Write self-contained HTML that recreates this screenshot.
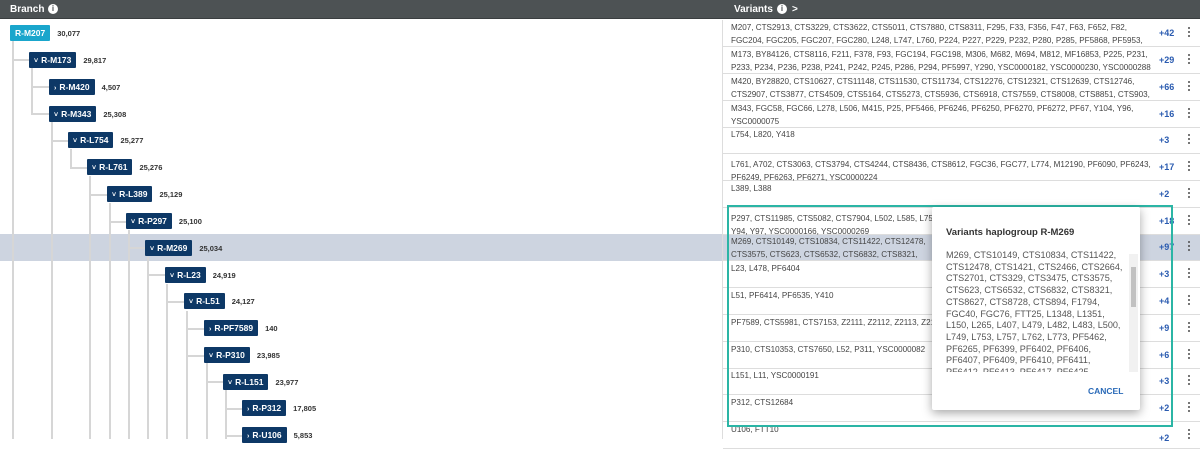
<!DOCTYPE html>
<html><head><meta charset="utf-8"><style>
*{margin:0;padding:0;box-sizing:border-box}
body{width:1200px;height:439px;overflow:hidden;background:#fff;font-family:"Liberation Sans",Arial,sans-serif;position:relative}
.hdr{position:absolute;left:0;top:0;width:1200px;height:19px;background:#4d5254;border-bottom:1px solid #3a3e40}
.ht{position:absolute;top:4px;color:#fff;font-weight:bold;font-size:10px}
.info{position:absolute;top:4px;width:10px;height:10px;border-radius:50%;background:#fff;color:#4d5254;font-size:8px;font-weight:bold;text-align:center;line-height:10px}
.hl{position:absolute;left:0;top:234px;width:1200px;height:27px;background:#cdd4e0}
.v{position:absolute;width:1.5px;background:#d6d6d6}
.h{position:absolute;height:1.5px;background:#d6d6d6}
.n{position:absolute;display:flex;align-items:center;gap:7px;height:16px}
.box{height:16px;background:#0d3866;color:#fff;font-size:8.5px;font-weight:bold;line-height:16px;padding:0 5px;border-radius:1px;white-space:nowrap}
.box i{font-style:normal;font-size:7px;margin-right:3px}
.cnt{font-size:7.5px;font-weight:bold;color:#333;white-space:nowrap}
.panel{position:absolute;left:722px;top:20px;width:478px;height:419px;border-left:1px solid #ddd}
.row{position:absolute;left:0;width:478px;height:27px;border-bottom:1px solid #ddd}
.row .t{position:absolute;left:8px;top:2px;width:425px;font-size:8.1px;line-height:12.5px;color:#444;overflow:hidden;height:25px;white-space:normal}
.row .c{position:absolute;left:436px;top:8px;font-size:9px;font-weight:bold;color:#2a5bb0}
.row .k{position:absolute;left:465px;top:6px;width:2px;height:12px;background:radial-gradient(circle,#555 0.9px,transparent 1.1px) 0 0/2px 4px}
.teal{position:absolute;left:727px;top:205px;width:446px;height:222px;border:2px solid #2bb5a5}
.pop{position:absolute;left:932px;top:207px;width:208px;height:203px;background:#fff;box-shadow:0 3px 10px rgba(0,0,0,.35);border-radius:2px}
.pop .tt{position:absolute;left:14px;top:20px;font-size:9.5px;font-weight:bold;color:#333}
.pop .b{position:absolute;left:14px;top:43px;width:178px;font-size:9.1px;line-height:11.7px;color:#555;height:122px;overflow:hidden}
.pop .sb{position:absolute;left:197px;top:47px;width:9px;height:118px;background:#f1f1f1}
.pop .th{position:absolute;left:199px;top:60px;width:5px;height:40px;background:#c1c1c1}
.pop .cc{position:absolute;left:156px;top:179px;font-size:8.5px;font-weight:bold;color:#2a6ab8}
</style></head><body>
<div class="hdr"></div>
<div class="ht" style="left:10px">Branch</div><div class="info" style="left:48px">i</div>
<div class="ht" style="left:734px">Variants</div><div class="info" style="left:777px">i</div><div class="ht" style="left:792px">&gt;</div>
<div class="hl"></div>

<div class="v" style="left:12px;top:41px;height:398px"></div>
<div class="v" style="left:31px;top:68px;height:46px"></div>
<div class="v" style="left:51px;top:122px;height:317px"></div>
<div class="v" style="left:70px;top:149px;height:19px"></div>
<div class="v" style="left:89px;top:176px;height:263px"></div>
<div class="v" style="left:109px;top:203px;height:236px"></div>
<div class="v" style="left:128px;top:230px;height:209px"></div>
<div class="v" style="left:147px;top:257px;height:182px"></div>
<div class="v" style="left:166px;top:284px;height:155px"></div>
<div class="v" style="left:186px;top:311px;height:128px"></div>
<div class="v" style="left:206px;top:362px;height:77px"></div>
<div class="v" style="left:225px;top:389px;height:50px"></div>

<div class="h" style="left:12px;top:59px;width:18px"></div>
<div class="h" style="left:31px;top:86px;width:18px"></div>
<div class="h" style="left:31px;top:113px;width:18px"></div>
<div class="h" style="left:51px;top:140px;width:18px"></div>
<div class="h" style="left:70px;top:167px;width:18px"></div>
<div class="h" style="left:89px;top:194px;width:18px"></div>
<div class="h" style="left:109px;top:221px;width:18px"></div>
<div class="h" style="left:128px;top:247px;width:18px"></div>
<div class="h" style="left:147px;top:274px;width:18px"></div>
<div class="h" style="left:166px;top:301px;width:18px"></div>
<div class="h" style="left:186px;top:328px;width:18px"></div>
<div class="h" style="left:186px;top:355px;width:18px"></div>
<div class="h" style="left:206px;top:381px;width:18px"></div>
<div class="h" style="left:225px;top:408px;width:18px"></div>
<div class="h" style="left:225px;top:435px;width:18px"></div>

<div class="n" style="left:10px;top:25px"><div class="box" style="background:#1aa6cc">R-M207</div><div class="cnt">30,077</div></div>
<div class="n" style="left:29px;top:52px"><div class="box"><i>˅</i>R-M173</div><div class="cnt">29,817</div></div>
<div class="n" style="left:49px;top:79px"><div class="box"><i>›</i>R-M420</div><div class="cnt">4,507</div></div>
<div class="n" style="left:49px;top:106px"><div class="box"><i>˅</i>R-M343</div><div class="cnt">25,308</div></div>
<div class="n" style="left:68px;top:132px"><div class="box"><i>˅</i>R-L754</div><div class="cnt">25,277</div></div>
<div class="n" style="left:87px;top:159px"><div class="box"><i>˅</i>R-L761</div><div class="cnt">25,276</div></div>
<div class="n" style="left:107px;top:186px"><div class="box"><i>˅</i>R-L389</div><div class="cnt">25,129</div></div>
<div class="n" style="left:126px;top:213px"><div class="box"><i>˅</i>R-P297</div><div class="cnt">25,100</div></div>
<div class="n" style="left:145px;top:240px"><div class="box"><i>˅</i>R-M269</div><div class="cnt">25,034</div></div>
<div class="n" style="left:165px;top:267px"><div class="box"><i>˅</i>R-L23</div><div class="cnt">24,919</div></div>
<div class="n" style="left:184px;top:293px"><div class="box"><i>˅</i>R-L51</div><div class="cnt">24,127</div></div>
<div class="n" style="left:204px;top:320px"><div class="box"><i>›</i>R-PF7589</div><div class="cnt">140</div></div>
<div class="n" style="left:204px;top:347px"><div class="box"><i>˅</i>R-P310</div><div class="cnt">23,985</div></div>
<div class="n" style="left:223px;top:374px"><div class="box"><i>˅</i>R-L151</div><div class="cnt">23,977</div></div>
<div class="n" style="left:242px;top:400px"><div class="box"><i>›</i>R-P312</div><div class="cnt">17,805</div></div>
<div class="n" style="left:242px;top:427px"><div class="box"><i>›</i>R-U106</div><div class="cnt">5,853</div></div>

<div class="panel">
<div class="row" style="top:0"><div class="t">M207, CTS2913, CTS3229, CTS3622, CTS5011, CTS7880, CTS8311, F295, F33, F356, F47, F63, F652, F82, FGC204, FGC205, FGC207, FGC280, L248, L747, L760, P224, P227, P229, P232, P280, P285, PF5868, PF5953, PF6002,</div><div class="c">+42</div><div class="k"></div></div>
<div class="row" style="top:27px"><div class="t">M173, BY84126, CTS8116, F211, F378, F93, FGC194, FGC198, M306, M682, M694, M812, MF16853, P225, P231, P233, P234, P236, P238, P241, P242, P245, P286, P294, PF5997, Y290, YSC0000182, YSC0000230, YSC0000288</div><div class="c">+29</div><div class="k"></div></div>
<div class="row" style="top:54px"><div class="t">M420, BY28820, CTS10627, CTS11148, CTS11530, CTS11734, CTS12276, CTS12321, CTS12639, CTS12746, CTS2907, CTS3877, CTS4509, CTS5164, CTS5273, CTS5936, CTS6918, CTS7559, CTS8008, CTS8851, CTS903,</div><div class="c">+66</div><div class="k"></div></div>
<div class="row" style="top:81px"><div class="t">M343, FGC58, FGC66, L278, L506, M415, P25, PF5466, PF6246, PF6250, PF6270, PF6272, PF67, Y104, Y96, YSC0000075</div><div class="c">+16</div><div class="k"></div></div>
<div class="row" style="top:107px"><div class="t">L754, L820, Y418</div><div class="c">+3</div><div class="k"></div></div>
<div class="row" style="top:134px"><div class="t" style="top:5px">L761, A702, CTS3063, CTS3794, CTS4244, CTS8436, CTS8612, FGC36, FGC77, L774, M12190, PF6090, PF6243, PF6249, PF6263, PF6271, YSC0000224</div><div class="c">+17</div><div class="k"></div></div>
<div class="row" style="top:161px"><div class="t">L389, L388</div><div class="c">+2</div><div class="k"></div></div>
<div class="row" style="top:188px"><div class="t" style="top:5px">P297, CTS11985, CTS5082, CTS7904, L502, L585, L752, L</div><div class="t" style="top:18px;height:12px">Y94, Y97, YSC0000166, YSC0000269</div><div class="c">+18</div><div class="k"></div></div>
<div class="row" style="top:214px"><div class="t" style="width:205px">M269, CTS10149, CTS10834, CTS11422, CTS12478, CTS3575, CTS623, CTS6532, CTS6832, CTS8321, CTS86</div><div class="c">+97</div><div class="k"></div></div>
<div class="row" style="top:241px"><div class="t">L23, L478, PF6404</div><div class="c">+3</div><div class="k"></div></div>
<div class="row" style="top:268px"><div class="t">L51, PF6414, PF6535, Y410</div><div class="c">+4</div><div class="k"></div></div>
<div class="row" style="top:295px"><div class="t">PF7589, CTS5981, CTS7153, Z2111, Z2112, Z2113, Z211</div><div class="c">+9</div><div class="k"></div></div>
<div class="row" style="top:322px"><div class="t">P310, CTS10353, CTS7650, L52, P311, YSC0000082</div><div class="c">+6</div><div class="k"></div></div>
<div class="row" style="top:348px"><div class="t">L151, L11, YSC0000191</div><div class="c">+3</div><div class="k"></div></div>
<div class="row" style="top:375px"><div class="t">P312, CTS12684</div><div class="c">+2</div><div class="k"></div></div>
<div class="row" style="top:402px"><div class="t">U106, FTT10</div><div class="c" style="top:11px">+2</div><div class="k"></div></div>
</div>

<div class="teal"></div>
<div class="pop">
<div class="tt">Variants haplogroup R-M269</div>
<div class="b">M269, CTS10149, CTS10834, CTS11422, CTS12478, CTS1421, CTS2466, CTS2664, CTS2701, CTS329, CTS3475, CTS3575, CTS623, CTS6532, CTS6832, CTS8321, CTS8627, CTS8728, CTS894, F1794, FGC40, FGC76, FTT25, L1348, L1351, L150, L265, L407, L479, L482, L483, L500, L749, L753, L757, L762, L773, PF5462, PF6265, PF6399, PF6402, PF6406, PF6407, PF6409, PF6410, PF6411, PF6412, PF6413, PF6417, PF6425,</div>
<div class="sb"></div><div class="th"></div>
<div class="cc">CANCEL</div>
</div>
</body></html>
